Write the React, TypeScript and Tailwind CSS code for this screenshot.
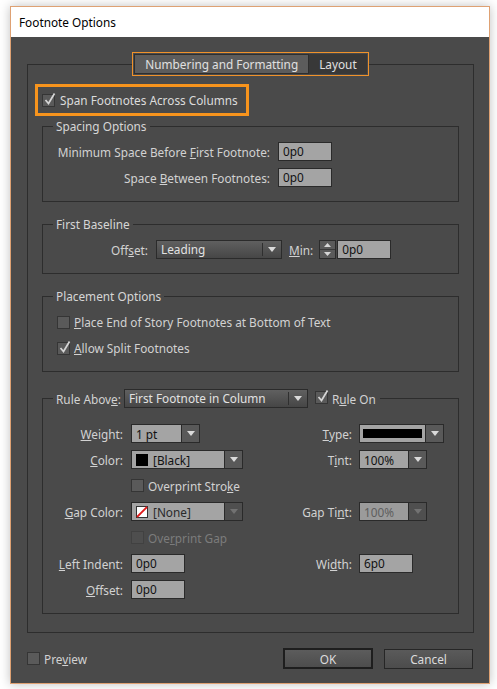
import React from 'react'

const Arrow = ({ dim }: { dim?: boolean }) => (
  <svg width="8" height="5" viewBox="0 0 8 5">
    <path d="M0 0h8L4 5z" fill={dim ? '#727272' : '#dadada'} />
  </svg>
)

function Check({ checked, disabled }: { checked?: boolean; disabled?: boolean }) {
  return (
    <span
      className={
        disabled
          ? 'relative inline-block w-[13px] h-[13px] shrink-0 bg-[#4e4e4e] border border-[#414141]'
          : 'relative inline-block w-[13px] h-[13px] shrink-0 bg-[#5a5a5a] border border-[#353535]'
      }
    >
      {checked && (
        <svg className="absolute -top-[3px] left-[1px]" width="12" height="14" viewBox="0 0 12 14">
          <path d="M1.5 8 L4.5 11.5 L10.5 1.5" stroke="#d6d6d6" strokeWidth="1.7" fill="none" />
        </svg>
      )}
    </span>
  )
}

function Input({ value, w }: { value: string; w: string }) {
  return (
    <div className={w + ' h-[19px] bg-[#a4a4a4] border border-[#2a2a2a] text-[#121212] px-[4px] leading-[17px]'}>
      {value}
    </div>
  )
}

function DarkSelect({ value, w }: { value: string; w: string }) {
  return (
    <div className={w + ' flex h-[19px] border border-[#2b2b2b] bg-linear-to-b from-[#606060] to-[#464646] text-[#e2e2e2]'}>
      <div className="flex-1 px-[4px] leading-[17px]">{value}</div>
      <div className="w-px my-[2px] bg-[#2f2f2f]" />
      <div className="w-[18px] flex items-center justify-center">
        <Arrow />
      </div>
    </div>
  )
}

function LightSelect({
  w,
  children,
  dim,
  textDim,
}: {
  w: string
  children: React.ReactNode
  dim?: boolean
  textDim?: boolean
}) {
  return (
    <div className={w + ' flex h-[19px] border border-[#2a2a2a]'}>
      <div
        className={
          textDim
            ? 'flex-1 flex items-center bg-[#9b9b9b] text-[#5e5e5e] px-[4px]'
            : 'flex-1 flex items-center bg-[#a4a4a4] text-[#121212] px-[4px]'
        }
      >
        {children}
      </div>
      <div
        className={
          dim
            ? 'w-[18px] flex items-center justify-center bg-[#4f4f4f] border-l border-[#2a2a2a]'
            : 'w-[18px] flex items-center justify-center bg-[#595959] border-l border-[#2a2a2a]'
        }
      >
        <Arrow dim={dim} />
      </div>
    </div>
  )
}

function RuleRow({
  label,
  control,
  rlabel,
  rcontrol,
}: {
  label?: React.ReactNode
  control?: React.ReactNode
  rlabel?: React.ReactNode
  rcontrol?: React.ReactNode
}) {
  return (
    <div className="flex items-center h-[19px]">
      <div className="flex items-center w-[309px]">
        <span className="w-[80px] text-right">{label}</span>
        <div className="ml-[8px]">{control}</div>
        <span className="ml-auto">{rlabel}</span>
      </div>
      <div className="ml-[7px]">{rcontrol}</div>
    </div>
  )
}

export default function App() {
  return (
    <div className="min-h-screen bg-white pt-[6px] pl-[10px] font-['Noto_Sans',sans-serif] text-[11.8px] leading-[16px]">
      <div className="w-[480px] border border-[#dea173] shadow-[0_0_10px_rgba(0,0,0,0.25)]">
        <div className="h-[30px] bg-white flex items-center pl-[8px] text-black">Footnote Options</div>

        <div className="bg-[#4a4a4a] text-[#d2d2d2] pt-[15px] px-[16px] pb-[14px]">
          <fieldset className="w-[447px] border border-[#2d2d2d] px-0 pb-[18px]">
            <legend className="mx-auto flex border border-[#f0922a] p-px">
              <span className="h-[20px] px-[10px] bg-[#5c5c5c] border border-[#2e2e2e] text-[#e0e0e0] leading-[18px]">
                Numbering and Formatting
              </span>
              <span className="h-[20px] px-[10px] bg-[#383838] text-[#e0e0e0] leading-[20px]">Layout</span>
            </legend>

            <div className="ml-[7px] mt-[8px] w-[214px] h-[32px] border-[3px] border-[#f7941d] flex items-center pl-[4px] gap-[5px] text-[#dcdcdc]">
              <Check checked />
              <span>Span Footnotes Across Columns</span>
            </div>

            <div className="px-[14px]">
              <fieldset className="mt-[2px] border border-[#2d2d2d] px-0 pb-[14px]">
                <legend className="ml-[10px] px-[3px] text-[#d6d6d6]">Spacing Options</legend>
                <div className="pt-[8px] flex flex-col gap-[7px]">
                  <div className="flex items-center">
                    <span className="w-[227px] text-right">
                      Minimum Space Before <u>F</u>irst Footnote:
                    </span>
                    <div className="ml-[8px]">
                      <Input value="0p0" w="w-[54px]" />
                    </div>
                  </div>
                  <div className="flex items-center">
                    <span className="w-[227px] text-right">
                      Space <u>B</u>etween Footnotes:
                    </span>
                    <div className="ml-[8px]">
                      <Input value="0p0" w="w-[54px]" />
                    </div>
                  </div>
                </div>
              </fieldset>

              <fieldset className="mt-[14px] border border-[#2d2d2d] px-0 pb-[14px]">
                <legend className="ml-[10px] px-[3px] text-[#d6d6d6]">First Baseline</legend>
                <div className="pt-[8px] flex items-center">
                  <span className="w-[105px] text-right">
                    Off<u>s</u>et:
                  </span>
                  <div className="ml-[8px]">
                    <DarkSelect value="Leading" w="w-[126px]" />
                  </div>
                  <span className="ml-[7px]">
                    <u>M</u>in:
                  </span>
                  <div className="ml-[6px] w-[17px] h-[19px] border border-[#2b2b2b] bg-[#5a5a5a] flex flex-col">
                    <div className="flex-1 flex items-center justify-center">
                      <svg width="7" height="4" viewBox="0 0 7 4">
                        <path d="M0 4h7L3.5 0z" fill="#d6d6d6" />
                      </svg>
                    </div>
                    <div className="h-px bg-[#3a3a3a]" />
                    <div className="flex-1 flex items-center justify-center">
                      <svg width="7" height="4" viewBox="0 0 7 4">
                        <path d="M0 0h7L3.5 4z" fill="#d6d6d6" />
                      </svg>
                    </div>
                  </div>
                  <div className="ml-[1px]">
                    <Input value="0p0" w="w-[54px]" />
                  </div>
                </div>
              </fieldset>

              <fieldset className="mt-[14px] border border-[#2d2d2d] px-0 pb-[14px]">
                <legend className="ml-[10px] px-[3px] text-[#d6d6d6]">Placement Options</legend>
                <div className="pt-[9px] pl-[14px] flex flex-col gap-[8px]">
                  <div className="flex items-center h-[18px] gap-[4px]">
                    <Check />
                    <span>
                      <u>P</u>lace End of Story Footnotes at Bottom of Text
                    </span>
                  </div>
                  <div className="flex items-center h-[18px] gap-[4px]">
                    <Check checked />
                    <span>
                      <u>A</u>llow Split Footnotes
                    </span>
                  </div>
                </div>
              </fieldset>

              <fieldset className="mt-[17px] border border-[#2d2d2d] px-0 pb-[14px]">
                <legend className="ml-[10px] px-[3px] pr-[4px] flex items-center">
                  <span>
                    Rule Abov<u>e</u>:
                  </span>
                  <div className="ml-[3px]">
                    <DarkSelect value="First Footnote in Column" w="w-[184px]" />
                  </div>
                  <span className="ml-[7px]">
                    <Check checked />
                  </span>
                  <span className="ml-[4px]">
                    R<u>u</u>le On
                  </span>
                </legend>
                <div className="pt-[16px] flex flex-col gap-[7px]">
                  <RuleRow
                    label={
                      <>
                        <u>W</u>eight:
                      </>
                    }
                    control={<LightSelect w="w-[69px]">1 pt</LightSelect>}
                    rlabel={
                      <>
                        <u>T</u>ype:
                      </>
                    }
                    rcontrol={
                      <LightSelect w="w-[85px]">
                        <div className="flex-1 h-[9px] bg-black -mx-px" />
                      </LightSelect>
                    }
                  />
                  <RuleRow
                    label={
                      <>
                        <u>C</u>olor:
                      </>
                    }
                    control={
                      <LightSelect w="w-[112px]">
                        <span className="w-[12px] h-[12px] bg-black mr-[5px]" />
                        [Black]
                      </LightSelect>
                    }
                    rlabel={
                      <>
                        T<u>i</u>nt:
                      </>
                    }
                    rcontrol={<LightSelect w="w-[68px]">100%</LightSelect>}
                  />
                  <div className="flex items-center h-[19px] pl-[88px] gap-[4px]">
                    <Check />
                    <span>
                      Overprint Stro<u>k</u>e
                    </span>
                  </div>
                  <RuleRow
                    label={
                      <>
                        <u>G</u>ap Color:
                      </>
                    }
                    control={
                      <LightSelect w="w-[112px]" dim>
                        <svg className="mr-[5px]" width="12" height="12" viewBox="0 0 12 12">
                          <rect x="0.5" y="0.5" width="11" height="11" fill="#fff" stroke="#333" />
                          <path d="M1 11 L11 1" stroke="#e01b1b" strokeWidth="1.8" />
                        </svg>
                        <span className="text-[#2a2a2a]">[None]</span>
                      </LightSelect>
                    }
                    rlabel={
                      <>
                        Gap Ti<u>n</u>t:
                      </>
                    }
                    rcontrol={
                      <LightSelect w="w-[68px]" dim textDim>
                        100%
                      </LightSelect>
                    }
                  />
                  <div className="flex items-center h-[19px] pl-[88px] gap-[4px] text-[#7c7c7c]">
                    <Check disabled />
                    <span>
                      Ove<u>r</u>print Gap
                    </span>
                  </div>
                  <RuleRow
                    label={
                      <>
                        <u>L</u>eft Indent:
                      </>
                    }
                    control={<Input value="0p0" w="w-[54px]" />}
                    rlabel={
                      <>
                        Wi<u>d</u>th:
                      </>
                    }
                    rcontrol={<Input value="6p0" w="w-[54px]" />}
                  />
                  <RuleRow
                    label={
                      <>
                        <u>O</u>ffset:
                      </>
                    }
                    control={<Input value="0p0" w="w-[54px]" />}
                  />
                </div>
              </fieldset>
            </div>
          </fieldset>

          <div className="mt-[15px] flex items-center">
            <Check />
            <span className="ml-[4px]">
              Pre<u>v</u>iew
            </span>
            <button className="ml-auto w-[90px] h-[21px] border-2 border-[#1e1e1e] bg-linear-to-b from-[#5c5c5c] to-[#4d4d4d] text-[#dcdcdc]">
              OK
            </button>
            <button className="ml-[11px] w-[89px] h-[20px] border border-[#262626] bg-linear-to-b from-[#5a5a5a] to-[#4c4c4c] text-[#dcdcdc]">
              Cancel
            </button>
          </div>
        </div>
      </div>
    </div>
  )
}
